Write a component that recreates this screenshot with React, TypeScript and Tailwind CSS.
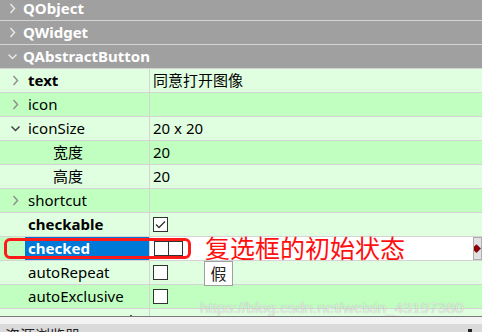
import React from "react";

const font = { fontFamily: '"Noto Sans", "Noto Sans CJK SC", sans-serif' };

function Chevron({ open, color }: { open?: boolean; color: string }) {
  return (
    <svg width="9" height="11" viewBox="0 0 9 11" className="shrink-0">
      {open ? (
        <path d="M0.5 3.5 L4.5 7.5 L8.5 3.5" fill="none" stroke={color} strokeWidth="1.5" />
      ) : (
        <path d="M2.5 1 L6.5 5.5 L2.5 10" fill="none" stroke={color} strokeWidth="1.5" />
      )}
    </svg>
  );
}

function Box({ checked }: { checked?: boolean }) {
  return (
    <div className="w-[15px] h-[15px] border border-[#333] bg-white flex items-center justify-center">
      {checked && (
        <svg width="11" height="9" viewBox="0 0 11 9">
          <path d="M1 4.5 L4 7.5 L10 1.5" fill="none" stroke="#333" strokeWidth="1.3" />
        </svg>
      )}
    </div>
  );
}

function Header({ label, open }: { label: string; open?: boolean }) {
  return (
    <div className="flex h-[24px] shrink-0 bg-[#a0a0a0] border-b border-[#d4d4d4] items-center">
      <div className="w-[23px] flex justify-center pl-[2px]">
        <Chevron open={open} color="#e8e8e8" />
      </div>
      <span className="text-white font-bold text-[15px] leading-none">{label}</span>
    </div>
  );
}

function Row({
  name,
  value,
  dark,
  bold,
  arrow,
  indent,
}: {
  name: string;
  value?: React.ReactNode;
  dark?: boolean;
  bold?: boolean;
  arrow?: "closed" | "open";
  indent?: boolean;
}) {
  return (
    <div
      className={`flex h-[24px] shrink-0 border-b border-[#d4d4d4] ${dark ? "bg-[#c0ffc0]" : "bg-[#e0ffe0]"}`}
    >
      <div className="w-[150px] shrink-0 border-r border-[#d4d4d4] flex items-center">
        <div className="w-[28px] shrink-0 flex justify-center pl-[2px]">
          {arrow && <Chevron open={arrow === "open"} color={arrow === "open" ? "#404040" : "#909090"} />}
        </div>
        <span
          className={`text-[15px] leading-none text-black ${bold ? "font-bold" : ""} ${indent ? "pl-[25px]" : ""}`}
        >
          {name}
        </span>
      </div>
      <div className="flex-1 flex items-center pl-[3px] text-[15px] leading-none text-black">{value}</div>
    </div>
  );
}

export default function App() {
  return (
    <div className="w-[482px] h-[332px] overflow-hidden bg-[#f0f0f0] flex flex-col" style={font}>
      <div className="h-[317px] shrink-0 overflow-hidden border-b border-[#7a7a7a] relative">
        <div className="-mt-[3px] flex flex-col">
          <Header label="QObject" />
          <Header label="QWidget" />
          <Header label="QAbstractButton" open />
          <Row name="text" bold arrow="closed" value="同意打开图像" />
          <Row name="icon" dark arrow="closed" />
          <Row name="iconSize" arrow="open" value="20 x 20" />
          <Row name="宽度" dark indent value="20" />
          <Row name="高度" indent value="20" />
          <Row name="shortcut" dark arrow="closed" />
          <Row name="checkable" bold value={<Box checked />} />
          {/* checked row (selected) */}
          <div className="flex h-[24px] shrink-0 border-b border-[#d4d4d4] bg-[#c0ffc0]">
            <div className="w-[150px] shrink-0 border-r border-[#d4d4d4] flex items-center">
              <div className="w-[25px] shrink-0" />
              <div className="flex-1 self-stretch bg-[#0078d7] flex items-center pl-[3px]">
                <span className="text-white font-bold text-[15px] leading-none">checked</span>
              </div>
            </div>
            <div className="flex-1 flex items-center bg-white">
              <div className="pl-[4px] flex">
                <Box />
                <div className="-ml-[1px]">
                  <Box />
                </div>
              </div>
              <span className="ml-[22px] text-[25px] leading-none text-[#ff1010] whitespace-nowrap">
                复选框的初始状态
              </span>
              <div className="flex-1" />
              <div className="w-[9px] self-stretch bg-[#e1e1e1] border border-[#adadad] flex items-center justify-end overflow-hidden">
                <span className="text-[9px] text-[#8b0000] leading-none">◆</span>
              </div>
            </div>
          </div>
          <Row
            name="autoRepeat"
            value={
              <div className="flex items-center">
                <Box />
                <div className="ml-[36px] mt-[2px] w-[29px] h-[25px] bg-white border border-[#a0a0a0] flex items-center justify-center text-[16px] text-[#222] relative z-10">
                  假
                </div>
              </div>
            }
          />
          <Row name="autoExclusive" dark value={<Box />} />
          <Row name="autoRepeatDelay" value="300" />
        </div>
        {/* red annotation frame */}
        <div className="absolute left-[4px] top-[238px] w-[187px] h-[21px] border-[3px] border-[#ff1a1a] rounded-[6px] pointer-events-none" />
        {/* watermark */}
        <div
          className="absolute left-[200px] top-[300px] text-[15.5px] leading-none text-white/70 whitespace-nowrap pointer-events-none"
          style={{ fontFamily: '"Liberation Sans", Arial, sans-serif', textShadow: "0 0 1px rgba(110,110,110,0.6)" }}
        >
          https://blog.csdn.net/weixin_43197380
        </div>
      </div>
      <div className="h-[7px] shrink-0 bg-[#f3f3f3]" />
      <div className="flex-1 bg-[#dadada] flex items-start pl-[5px] relative overflow-hidden">
        <span className="text-[15px] leading-none text-[#222] mt-[4px]">资源浏览器</span>
        <div className="absolute right-[10px] top-[5px] w-[4px] h-[4px] bg-[#222]" />
      </div>
    </div>
  );
}
